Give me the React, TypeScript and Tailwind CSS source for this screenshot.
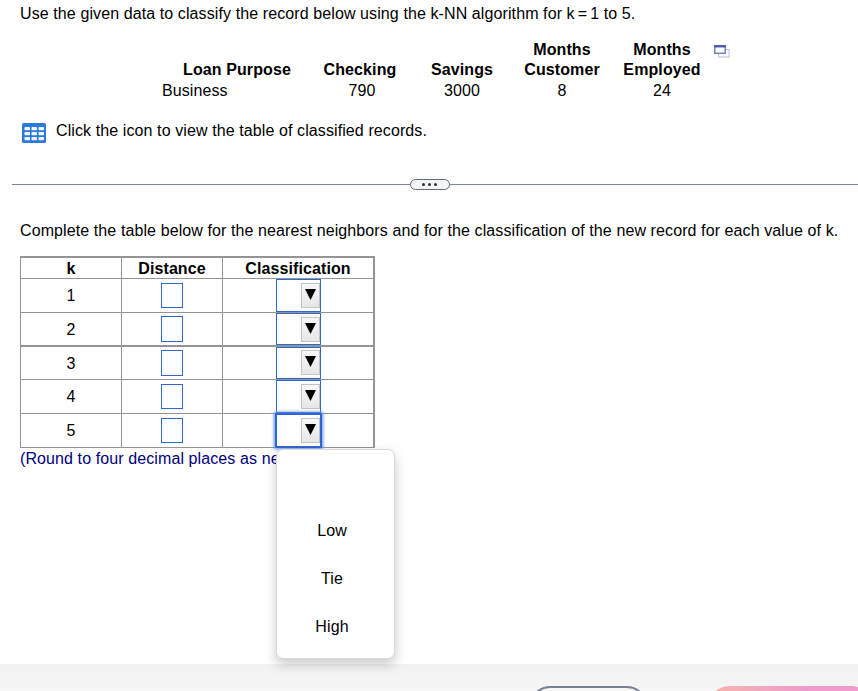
import React from 'react';

interface RecordColumn {
  label: string[];
  value: string;
  labelClass?: string;
}

interface AnswerRow {
  k: number;
  rowClass: string;
  inputClass: string;
  selectClass: string;
  buttonClass: string;
}

const columns: RecordColumn[] = [
  { label: ['Checking'], value: '790', labelClass: 'mr-1' },
  { label: ['Savings'], value: '3000' },
  { label: ['Months', 'Customer'], value: '8' },
  { label: ['Months', 'Employed'], value: '24' },
];

const rows: AnswerRow[] = [
  { k: 1, rowClass: 'h-[34px] border-b', inputClass: 'mt-1 h-[25px]', selectClass: 'h-[33px] border', buttonClass: 'mt-[3px]' },
  { k: 2, rowClass: 'h-[34px] border-b-2', inputClass: 'mt-[3px] h-[26px]', selectClass: 'h-8 border', buttonClass: 'mt-[3px]' },
  { k: 3, rowClass: 'h-[33px] border-b', inputClass: 'mt-[3px] h-[26px]', selectClass: 'h-8 border', buttonClass: 'mt-[2px]' },
  { k: 4, rowClass: 'h-[34px] border-b', inputClass: 'mt-1 h-[25px]', selectClass: 'h-[33px] border', buttonClass: 'mt-[3px]' },
  {
    k: 5,
    rowClass: 'h-[34px] border-b',
    inputClass: 'mt-1 h-[25px]',
    selectClass: 'h-[33px] border shadow-[0_0_0_1px_#2f66d0,0_0_3px_2px_#5a8ae8]',
    buttonClass: 'mt-[3px]',
  },
];

const options = ['', 'Low', 'Tie', 'High'];

const PopupIcon: React.FC = () => (
  <svg className="mt-1 ml-[2px] h-[13px] w-[16px]" viewBox="0 0 16 13" fill="none">
    <rect x="4.5" y="4.5" width="10.5" height="7.5" fill="#fff" stroke="#b9bde0" />
    <rect x="0.75" y="0.75" width="10.5" height="7.5" fill="#fff" stroke="#7883c4" strokeWidth="1.5" />
    <path d="M0 1.25h12" stroke="#4f5fae" strokeWidth="2.5" />
  </svg>
);

const TableIcon: React.FC = () => (
  <svg className="mt-[7px] h-5 w-6 shrink-0" viewBox="0 0 24 20">
    <rect width="24" height="20" rx="1.5" fill="#2b7bdc" />
    {[4, 9, 14].map((y) =>
      [2.5, 9.5, 16.5].map((x) => (
        <rect key={`${x}-${y}`} x={x} y={y} width="5.5" height="3.25" rx="0.75" fill="#f2f7fd" />
      ))
    )}
  </svg>
);

const Dropdown: React.FC<{ row: AnswerRow }> = ({ row }) => (
  <div className={`relative ml-[53px] flex w-[45px] justify-end border-[#2f66d0] bg-white ${row.selectClass}`}>
    <div
      className={`flex h-[25px] w-[19px] justify-center border border-[#c3c3c3] bg-linear-to-b from-[#f8f8f8] to-[#e6e6e6] ${row.buttonClass}`}
    >
      <svg className="mt-[5px] h-[11px] w-[11px]" viewBox="0 0 11 11">
        <path d="M0 0h11L5.5 11z" fill="#000" />
      </svg>
    </div>
    {row.k === 5 && (
      <div className="absolute top-[34px] -left-px z-10 h-[210px] w-[119px] rounded-[7px] border border-[#d8d8d8] bg-white pt-[9px] shadow-[0_5px_12px_rgba(0,0,0,0.22)]">
        {options.map((option) => (
          <div key={option} className="flex h-12 items-center justify-center pr-[7px]">
            {option}
          </div>
        ))}
      </div>
    )}
  </div>
);

const App: React.FC = () => {
  return (
    <div className="flex h-[691px] w-[858px] flex-col overflow-hidden bg-white font-['Liberation_Sans',Arial,sans-serif] text-[16px] leading-5 tracking-[0.1px] text-black">
      <p className="mt-1 ml-5 whitespace-nowrap">
        Use the given data to classify the record below using the k-NN algorithm for k<span className="mx-[3px]">=</span>1 to 5.
      </p>

      <div className="mt-[17px] ml-[162px] flex h-[60px]">
        <div className="flex w-[150px] flex-col justify-end">
          <div className="text-center font-bold">Loan Purpose</div>
          <div className="mt-px">Business</div>
        </div>
        {columns.map((column) => (
          <div key={column.label.join(' ')} className="flex w-[100px] flex-col justify-end text-center">
            {column.label.map((line) => (
              <div key={line} className={`font-bold ${column.labelClass ?? ''}`}>{line}</div>
            ))}
            <div className="mt-px">{column.value}</div>
          </div>
        ))}
        <PopupIcon />
      </div>

      <div className="mt-[15px] ml-[22px] flex h-[30px]">
        <TableIcon />
        <p className="mt-[5px] ml-[10px]">Click the icon to view the table of classified records.</p>
      </div>

      <div className="mt-[33px] ml-3 flex h-[11px] items-center">
        <div className="h-px w-[398px] bg-[#7c8494]" />
        <div className="flex h-[11px] w-10 items-center justify-center gap-[3px] rounded-full border border-[#5f6b7e] bg-[#f4f5f8] pr-px">
          <span className="h-[3px] w-[3px] rounded-full bg-[#333]" />
          <span className="h-[3px] w-[3px] rounded-full bg-[#333]" />
          <span className="h-[3px] w-[3px] rounded-full bg-[#333]" />
        </div>
        <div className="h-px flex-1 bg-[#7c8494]" />
      </div>

      <p className="mt-[31px] ml-5 whitespace-nowrap">
        Complete the table below for the nearest neighbors and for the classification of the new record for each value of k.
      </p>

      <div className="mt-[15px] ml-5 w-[355px] border-t-2 border-r-2 border-l border-[#949494]">
        <div className="grid h-[21px] grid-cols-[101px_101px_150px] border-b border-[#949494] text-center font-bold">
          <div className="border-r border-[#949494] pt-px">k</div>
          <div className="border-r border-[#949494] pt-px">Distance</div>
          <div className="pt-px">Classification</div>
        </div>
        {rows.map((row) => (
          <div key={row.k} className={`grid grid-cols-[101px_101px_150px] border-[#949494] ${row.rowClass}`}>
            <div className="border-r border-[#949494] pt-[7px] text-center">{row.k}</div>
            <div className="flex items-start border-r border-[#949494]">
              <div className={`ml-[39px] w-[22px] border border-[#2f66d0] ${row.inputClass}`} />
            </div>
            <Dropdown row={row} />
          </div>
        ))}
      </div>
      <p className="mt-px ml-5 text-[#000080]">(Round to four decimal places as needed.)</p>

      <div className="mt-auto flex h-[27px] items-end justify-end bg-linear-to-b from-[#f1f1f1] to-[#f6f6f6]">
        <div className="mr-[62px] h-[5px] w-[117px] overflow-hidden">
          <div className="h-10 rounded-[20px] border-2 border-[#7a8195] bg-[#f6f6f6]" />
        </div>
        <div className="h-[5px] w-[149px] overflow-hidden">
          <div className="h-10 w-[162px] rounded-[20px] bg-linear-to-r from-[#f6b5aa] to-[#ee9bcb] to-60%" />
        </div>
      </div>
    </div>
  );
};

export default App;
